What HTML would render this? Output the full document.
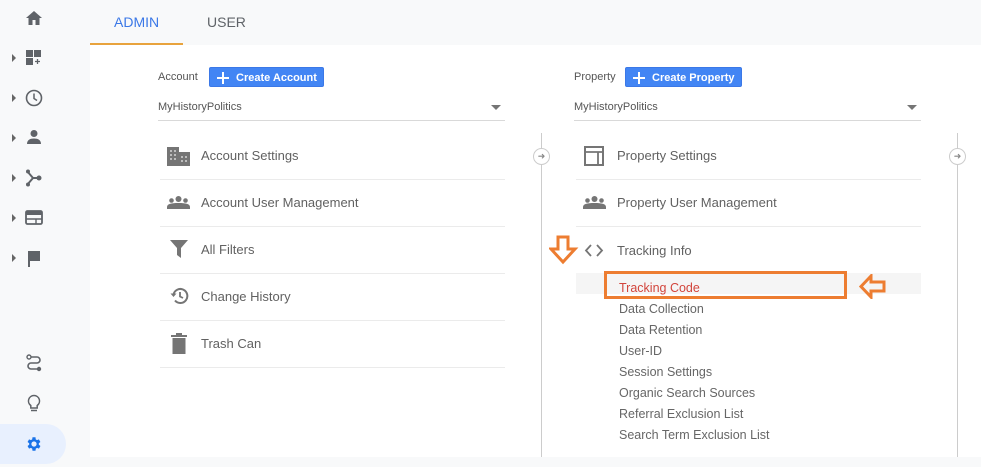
<!DOCTYPE html>
<html><head><meta charset="utf-8"><style>
*{margin:0;padding:0;box-sizing:border-box}
body{width:981px;height:467px;background:#f8f9fa;font-family:"Liberation Sans",Arial,sans-serif;position:relative;overflow:hidden;color:#5f6368}
.a{position:absolute}
.main{left:90px;top:45px;width:891px;height:412px;background:#fff}
.tab{font-size:14px;top:14px}
.lbl{font-size:11px;color:#555}
.btn{background:#4285f4;color:#fff;font-size:11px;font-weight:bold;height:20px;border-radius:2px;line-height:20px;padding-left:26px;border:1px solid #3b78e7}
.btn:before{content:"";position:absolute;left:7px;top:4px;width:12px;height:12px;background:linear-gradient(#fff,#fff) center/12px 2px no-repeat,linear-gradient(#fff,#fff) center/2px 12px no-repeat}
.dd{font-size:11px;color:#555}
.line{height:1px;background:#d9d9d9}
.item{font-size:13px;color:#616161}
.sep{height:1px;background:#ebebeb}
.sub{font-size:12.5px;color:#666;left:619px}
.tri{width:0;height:0;border-left:5px solid transparent;border-right:5px solid transparent;border-top:5px solid #757575}
.st{width:0;height:0;border-top:4px solid transparent;border-bottom:4px solid transparent;border-left:4px solid #666;left:12px}
.vl{width:1px;background:#ccc;top:133px;height:324px}
.circ{width:17px;height:17px;border:1px solid #ccc;border-radius:50%;background:#fff;color:#888;font-size:9px;text-align:center;line-height:15px}
</style></head><body>
<div class="a main"></div>
<div class="a" style="left:90px;top:0;width:891px;height:45px;background:#f8f9fa"></div>
<div class="a tab" style="left:114px;color:#3b78e7">ADMIN</div>
<div class="a tab" style="left:207px;color:#5f6368">USER</div>
<div class="a" style="left:90px;top:43px;width:93px;height:2px;background:#e8a33d"></div>

<svg class="a" style="left:25px;top:10px" width="18" height="16" viewBox="0 0 18 16"><path d="M9 1L1 8h2.5v7h4v-5h3v5h4V8H17z" fill="#5f6368"/></svg>
<div class="a st" style="top:54px"></div>
<svg class="a" style="left:26px;top:50px" width="16" height="16"><rect x="0" y="0" width="7" height="7" fill="#5f6368"/><rect x="8" y="0" width="7" height="7" fill="#5f6368"/><rect x="0" y="8" width="7" height="7" fill="#5f6368"/><path d="M11.5 9v5M9 11.5h5" stroke="#5f6368" stroke-width="1.3"/></svg>
<div class="a st" style="top:94px"></div>
<svg class="a" style="left:25px;top:89px" width="18" height="18"><circle cx="9" cy="9" r="7.5" fill="none" stroke="#5f6368" stroke-width="1.6"/><path d="M9 4.5V9.5l3 2" fill="none" stroke="#5f6368" stroke-width="1.5"/></svg>
<div class="a st" style="top:134px"></div>
<svg class="a" style="left:25px;top:129px" width="18" height="17"><circle cx="9" cy="4.5" r="3.5" fill="#5f6368"/><path d="M2 15c0-4 3-5.5 7-5.5s7 1.5 7 5.5z" fill="#5f6368"/></svg>
<div class="a st" style="top:174px"></div>
<svg class="a" style="left:25px;top:169px" width="18" height="18"><path d="M2 2l6 7-6 7M8 9h6" fill="none" stroke="#5f6368" stroke-width="2"/><circle cx="14" cy="9" r="2.5" fill="#5f6368"/><circle cx="3" cy="2.5" r="2" fill="#5f6368"/><circle cx="3" cy="15.5" r="2" fill="#5f6368"/></svg>
<div class="a st" style="top:214px"></div>
<svg class="a" style="left:25px;top:210px" width="18" height="15"><rect x="1" y="1" width="16" height="13" rx="1.5" fill="none" stroke="#5f6368" stroke-width="1.8"/><rect x="1" y="1" width="16" height="4" fill="#5f6368"/><path d="M1 9h16M11 9v5" stroke="#5f6368" stroke-width="1.4"/></svg>
<div class="a st" style="top:254px"></div>
<svg class="a" style="left:27px;top:250px" width="16" height="17"><path d="M1 1h12v10H3v6H1z" fill="#5f6368"/></svg>
<svg class="a" style="left:25px;top:354px" width="18" height="18"><circle cx="4" cy="3" r="2" fill="none" stroke="#5f6368" stroke-width="1.4"/><path d="M6 3h6a3 3 0 0 1 0 6H6a3 3 0 0 0 0 6h6" fill="none" stroke="#5f6368" stroke-width="1.6"/><circle cx="14" cy="15" r="2.2" fill="#5f6368"/></svg>
<svg class="a" style="left:26px;top:394px" width="16" height="20"><path d="M8 1.5a5.5 5.5 0 0 0-3.2 10V14h6.4v-2.5A5.5 5.5 0 0 0 8 1.5z" fill="none" stroke="#5f6368" stroke-width="1.5"/><path d="M5 16.5h6" stroke="#5f6368" stroke-width="1.5"/></svg>
<div class="a" style="left:-20px;top:424px;width:86px;height:40px;border-radius:0 20px 20px 0;background:#e8f0fe"></div>
<svg class="a" style="left:25px;top:435px" width="18" height="18" viewBox="0 0 24 24"><path fill="#1a73e8" d="M19.4 13a7.5 7.5 0 0 0 0-2l2.1-1.6-2-3.5-2.5 1a7 7 0 0 0-1.7-1L15 3h-4l-.4 2.9a7 7 0 0 0-1.7 1l-2.5-1-2 3.5L6.6 11a7.5 7.5 0 0 0 0 2l-2.200 1.6 2 3.5 2.5-1a7 7 0 0 0 1.7 1L11 21h4l.4-2.9a7 7 0 0 0 1.7-1l2.5 1 2-3.5zM13 15.5a3.5 3.5 0 1 1 0-7 3.5 3.5 0 0 1 0 7z" transform="translate(-1 0)"/></svg>

<div class="a lbl" style="left:158px;top:71px">Account</div>
<div class="a btn" style="left:209px;top:67px;width:115px">Create Account</div>
<div class="a dd" style="left:158px;top:101px">MyHistoryPolitics</div>
<div class="a tri" style="left:491px;top:105px"></div>
<div class="a line" style="left:158px;top:120px;width:347px"></div>

<svg class="a" style="left:167px;top:147px" width="23" height="19"><path d="M0 0h12v5h11v14H0z" fill="#757575"/><g fill="#bdbdbd"><rect x="3" y="3" width="2" height="2"/><rect x="7" y="3" width="2" height="2"/><rect x="3" y="7" width="2" height="2"/><rect x="7" y="7" width="2" height="2"/><rect x="3" y="11" width="2" height="2"/><rect x="7" y="11" width="2" height="2"/><rect x="14" y="9" width="2" height="2"/><rect x="18" y="9" width="2" height="2"/><rect x="14" y="13" width="2" height="2"/><rect x="18" y="13" width="2" height="2"/></g></svg>
<div class="a item" style="left:201px;top:148px">Account Settings</div>
<div class="a sep" style="left:160px;top:179px;width:345px"></div>
<svg class="a" style="left:167px;top:196px" width="23" height="13"><circle cx="11.5" cy="3" r="3" fill="#757575"/><circle cx="4.5" cy="4.5" r="2.3" fill="#757575"/><circle cx="18.5" cy="4.5" r="2.3" fill="#757575"/><path d="M0 13v-2c0-3 4-4 11.5-4s11.5 1 11.5 4v2z" fill="#757575"/></svg>
<div class="a item" style="left:201px;top:195px">Account User Management</div>
<div class="a sep" style="left:160px;top:226px;width:345px"></div>
<svg class="a" style="left:170px;top:240px" width="18" height="18"><path d="M0 0h18l-7 8v10l-4-3V8z" fill="#757575"/></svg>
<div class="a item" style="left:201px;top:242px">All Filters</div>
<div class="a sep" style="left:160px;top:273px;width:345px"></div>
<svg class="a" style="left:170px;top:287px" width="19" height="18" viewBox="0 0 19 18"><path d="M3.5 7.5A7 7 0 1 1 5 13.5" fill="none" stroke="#757575" stroke-width="2"/><path d="M0.5 6.5h6l-3 3.5z" fill="#757575"/><path d="M10 5v4.5l3 1.5" fill="none" stroke="#757575" stroke-width="1.8"/></svg>
<div class="a item" style="left:201px;top:289px">Change History</div>
<div class="a sep" style="left:160px;top:320px;width:345px"></div>
<svg class="a" style="left:171px;top:333px" width="16" height="21"><rect x="5" y="0" width="6" height="2" fill="#757575"/><rect x="0" y="2" width="16" height="2" fill="#757575"/><rect x="1.5" y="5" width="13" height="16" fill="#757575"/></svg>
<div class="a item" style="left:201px;top:336px">Trash Can</div>
<div class="a sep" style="left:160px;top:367px;width:345px"></div>

<div class="a vl" style="left:541px"></div>
<div class="a circ" style="left:533px;top:148px">➜</div>
<div class="a vl" style="left:957px"></div>
<div class="a circ" style="left:949px;top:148px">➜</div>

<div class="a lbl" style="left:574px;top:71px">Property</div>
<div class="a btn" style="left:625px;top:67px;width:117px">Create Property</div>
<div class="a dd" style="left:574px;top:101px">MyHistoryPolitics</div>
<div class="a tri" style="left:907px;top:105px"></div>
<div class="a line" style="left:574px;top:120px;width:347px"></div>

<svg class="a" style="left:584px;top:146px" width="20" height="20"><rect x="1" y="1" width="18" height="18" fill="none" stroke="#757575" stroke-width="2"/><path d="M1 6h18M14 6v13" stroke="#757575" stroke-width="1.8"/></svg>
<div class="a item" style="left:617px;top:148px">Property Settings</div>
<div class="a sep" style="left:576px;top:179px;width:345px"></div>
<svg class="a" style="left:583px;top:196px" width="23" height="13"><circle cx="11.5" cy="3" r="3" fill="#757575"/><circle cx="4.5" cy="4.5" r="2.3" fill="#757575"/><circle cx="18.5" cy="4.5" r="2.3" fill="#757575"/><path d="M0 13v-2c0-3 4-4 11.5-4s11.5 1 11.5 4v2z" fill="#757575"/></svg>
<div class="a item" style="left:617px;top:195px">Property User Management</div>
<div class="a sep" style="left:576px;top:226px;width:345px"></div>
<svg class="a" style="left:584px;top:244px" width="20" height="13"><path d="M7 1L2 6.5 7 12M13 1l5 5.5-5 5.5" fill="none" stroke="#757575" stroke-width="1.8"/></svg>
<div class="a item" style="left:617px;top:243px">Tracking Info</div>
<div class="a" style="left:576px;top:273px;width:345px;height:21px;background:#f5f5f5"></div>
<div class="a" style="left:604px;top:271px;width:243px;height:28px;border:3px solid #ed7d31"></div>
<div class="a sub" style="top:281px;color:#d2453c">Tracking Code</div>
<div class="a sub" style="top:302px">Data Collection</div>
<div class="a sub" style="top:323px">Data Retention</div>
<div class="a sub" style="top:344px">User-ID</div>
<div class="a sub" style="top:365px">Session Settings</div>
<div class="a sub" style="top:386px">Organic Search Sources</div>
<div class="a sub" style="top:407px">Referral Exclusion List</div>
<div class="a sub" style="top:428px">Search Term Exclusion List</div>

<svg class="a" style="left:549px;top:235px" width="30" height="30"><path d="M9 2h10v12h7L14 27 2 14h7z" fill="none" stroke="#ed7d31" stroke-width="3"/></svg>
<svg class="a" style="left:859px;top:274px" width="28" height="25"><path d="M2 12.5L12 2v6h13v9H12v6z" fill="none" stroke="#ed7d31" stroke-width="3"/></svg>
</body></html>
